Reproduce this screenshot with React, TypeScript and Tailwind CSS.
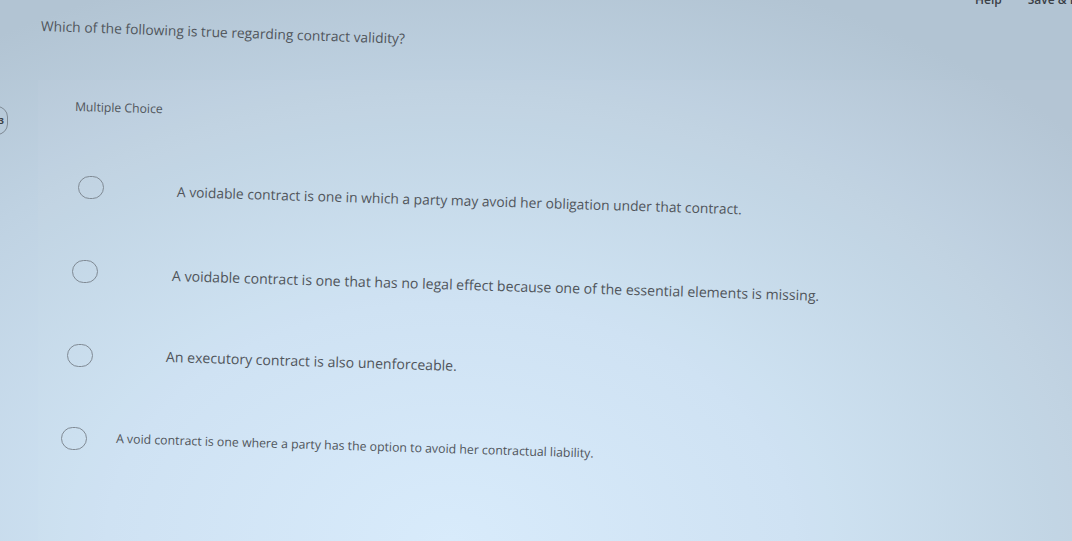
import React from "react";

type Opt = {
  text: string;
  circleMl: string;
  gap: string;
  rowMt: string;
  textMt: string;
  size: string;
};

const options: Opt[] = [
  {
    text: "A voidable contract is one in which a party may avoid her obligation under that contract.",
    circleMl: "ml-[40px]",
    gap: "ml-[73px]",
    rowMt: "mt-[63px]",
    textMt: "mt-[7px]",
    size: "text-[13.8px]",
  },
  {
    text: "A voidable contract is one that has no legal effect because one of the essential elements is missing.",
    circleMl: "ml-[34px]",
    gap: "ml-[74px]",
    rowMt: "mt-[59px]",
    textMt: "mt-[7px]",
    size: "text-[14.1px]",
  },
  {
    text: "An executory contract is also unenforceable.",
    circleMl: "ml-[29px]",
    gap: "ml-[73px]",
    rowMt: "mt-[59px]",
    textMt: "mt-[4px]",
    size: "text-[14.1px]",
  },
  {
    text: "A void contract is one where a party has the option to avoid her contractual liability.",
    circleMl: "ml-[23px]",
    gap: "ml-[29px]",
    rowMt: "mt-[60px]",
    textMt: "mt-[3px]",
    size: "text-[12.3px]",
  },
];

export default function App() {
  return (
    <div
      className="relative w-[1072px] h-[541px] overflow-hidden bg-[radial-gradient(ellipse_80%_110%_at_42%_100%,#d7ebfb_0%,#cee2f3_40%,#bfd2e2_75%,#b2c4d3_100%)] text-[#50555b] flex flex-col"
      style={{ fontFamily: "'Open Sans', 'Liberation Sans', sans-serif" }}
    >
      {/* top bar, cut off by the screen edge */}
      <div className="absolute top-[-9px] left-[975px] flex gap-[26px] text-[12px] font-semibold text-[#3b4046] whitespace-nowrap">
        <span>Help</span>
        <span>Save &amp; Exit</span>
      </div>

      {/* side badge, partially off screen */}
      <div className="absolute left-[-14px] top-[106px] w-[22px] h-[29px] rounded-full border border-[#7f8a94] flex items-center justify-end pr-[3px] text-[9px] font-bold text-[#3b4046]">
        3
      </div>

      <div className="pt-[17px] flex flex-col flex-1">
        <div className="pl-[41px]">
          <p className="origin-left rotate-[2deg] text-[13.8px] leading-[18px] whitespace-nowrap">
            Which of the following is true regarding contract validity?
          </p>
        </div>

        <div className="ml-[38px] mt-[45px] pt-[19px] flex-1 bg-white/[0.03]">
          <div className="pl-[37px]">
            <p className="origin-left rotate-[1.5deg] text-[12.2px] leading-[16px] whitespace-nowrap">
              Multiple Choice
            </p>
          </div>

          {options.map((o, i) => (
            <div key={i} className={`flex items-start ${i === 0 ? "mt-[61px]" : o.rowMt}`}>
              <div
                className={`${o.circleMl} w-[26px] h-[23px] shrink-0 rounded-full border-[1.5px] border-[#808a94]`}
              />
              <p
                className={`${o.gap} ${o.textMt} ${o.size} origin-left rotate-[1.75deg] leading-[18px] whitespace-nowrap`}
              >
                {o.text}
              </p>
            </div>
          ))}
        </div>
      </div>
    </div>
  );
}
